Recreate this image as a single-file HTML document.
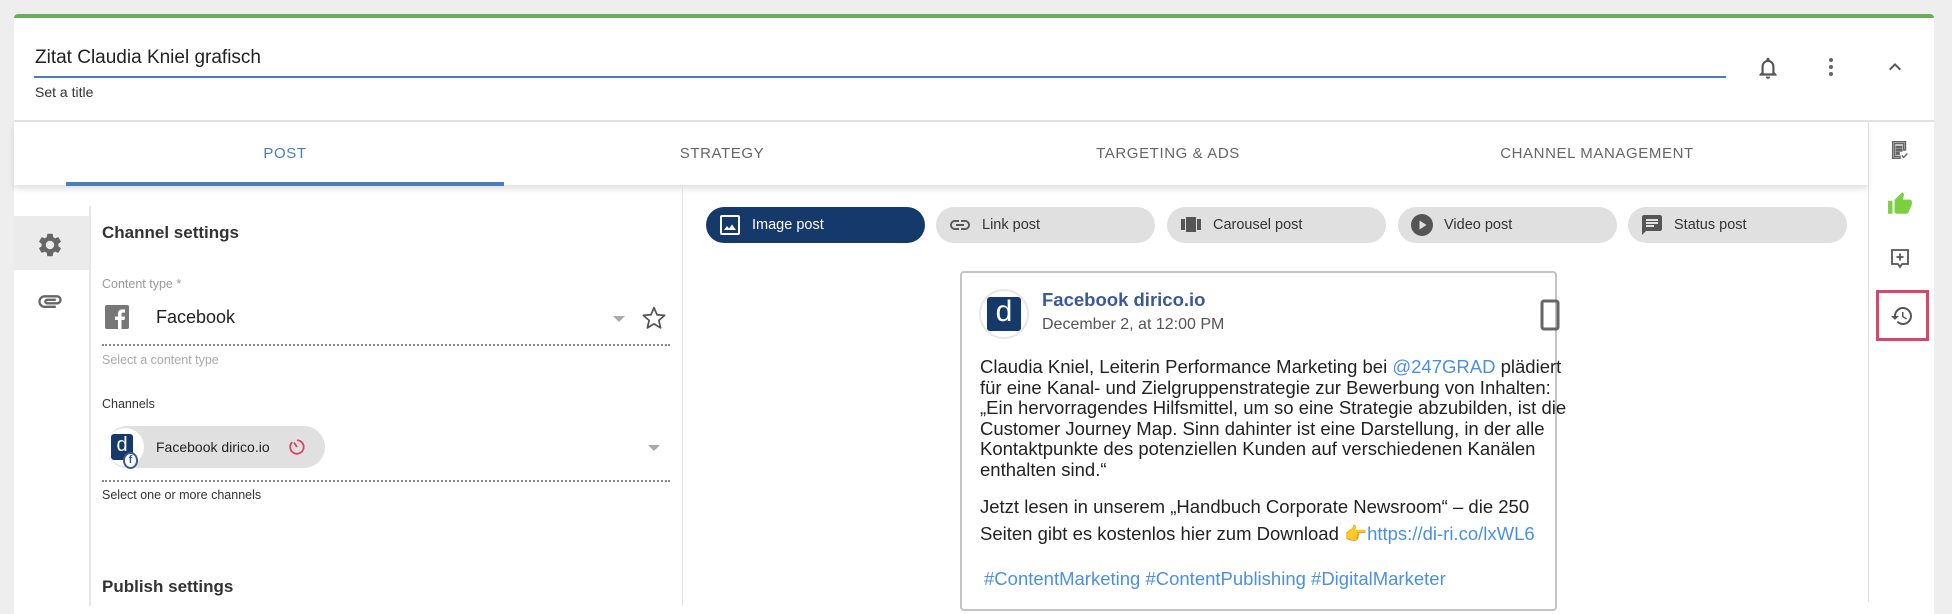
<!DOCTYPE html>
<html><head><meta charset="utf-8"><style>
*{box-sizing:border-box;margin:0;padding:0}
body{width:1952px;height:596px;background:#eeeeee;font-family:"Liberation Sans",Arial,sans-serif;position:relative;overflow:hidden;color:#333}
.a{position:absolute}
.card{left:14px;top:14px;width:1920px;height:600px;background:#fff;border-top:4px solid #6aae5a;border-radius:4px 4px 0 0}
.tab{position:absolute;top:145px;font-size:15px;letter-spacing:.6px;color:#666;transform:translateX(-50%)}
.pill{position:absolute;top:207px;height:36px;border-radius:18px;background:#e0e0e0;font-size:14.5px;color:#333;line-height:36px;padding-left:46px;width:219px}
.pill svg{position:absolute;left:12px;top:6px}
.dots{border-top:2px dotted #888}
.bt{font-size:18.5px;color:#222;line-height:20.6px}
.lnk{color:#4a90e2}
</style></head><body>
<div class="a card"></div>
<!-- header -->
<div class="a" style="left:35px;top:47px;font-size:19px;color:#222">Zitat Claudia Kniel grafisch</div>
<div class="a" style="left:34px;top:76px;width:1692px;height:2px;background:#4a7cc0"></div>
<div class="a" style="left:35px;top:84px;font-size:14px;color:#333">Set a title</div>
<svg class="a" style="left:1755px;top:54px" width="26" height="28" viewBox="0 0 24 24"><path d="M12 22c1.1 0 2-.9 2-2h-4c0 1.1.9 2 2 2zm6-6v-5c0-3.07-1.64-5.640-4.5-6.32V4c0-.83-.67-1.5-1.5-1.5s-1.5.67-1.5 1.5v.68C7.63 5.36 6 7.92 6 11v5l-2 2v1h16v-1l-2-2zm-2 1H8v-6c0-2.48 1.51-4.5 4-4.5s4 2.02 4 4.5v6z" fill="#555"/></svg>
<svg class="a" style="left:1819px;top:55px" width="24" height="24" viewBox="0 0 24 24"><circle cx="12" cy="5" r="2" fill="#666"/><circle cx="12" cy="12" r="2" fill="#666"/><circle cx="12" cy="19" r="2" fill="#666"/></svg>
<svg class="a" style="left:1883px;top:55px" width="24" height="24" viewBox="0 0 24 24"><path d="M7.4 15.4 12 10.8l4.6 4.6L18 14l-6-6-6 6z" fill="#555"/></svg>
<div class="a" style="left:14px;top:120px;width:1920px;height:2px;background:#e2e2e2"></div>
<!-- tabs -->
<div class="a" style="left:14px;top:122px;width:1854px;height:63px;background:#fff;box-shadow:0 4px 6px rgba(0,0,0,.12)"></div>
<div class="tab" style="left:285px;color:#4a7cc0">POST</div>
<div class="tab" style="left:722px">STRATEGY</div>
<div class="tab" style="left:1168px">TARGETING &amp; ADS</div>
<div class="tab" style="left:1597px">CHANNEL MANAGEMENT</div>
<div class="a" style="left:66px;top:182px;width:438px;height:4px;background:#4a7cc0"></div>
<!-- right sidebar -->
<div class="a" style="left:1868px;top:122px;width:1px;height:480px;background:#e0e0e0"></div>
<svg class="a" style="left:1889px;top:139px" width="22" height="22" viewBox="0 0 24 24"><path d="M4 3h14v9h-2V5H6v14h6v2H4z M8 8h6v1.6H8zM8 11.5h6v1.6H8zM8 15h3v1.6H8zM14 18l2 2 4-4" fill="none" stroke="#666" stroke-width="1.6"/></svg>
<svg class="a" style="left:1887px;top:191px" width="26" height="26" viewBox="0 0 24 24"><path d="M1 21h4V9H1v12zm22-11c0-1.1-.9-2-2-2h-6.3l1-4.6c0-.4-.1-.8-.4-1.1L14.2 1 7.6 7.6C7.2 7.9 7 8.4 7 9v10c0 1.1.9 2 2 2h9c.8 0 1.5-.5 1.8-1.2l3-7.1c.1-.2.2-.5.2-.7v-2z" fill="#7ccf3e"/></svg>
<svg class="a" style="left:1888px;top:247px" width="24" height="24" viewBox="0 0 24 24"><path d="M4 3h16v14h-6l-2 3-2-3H4z" fill="none" stroke="#555" stroke-width="1.8"/><path d="M12 6.5v7M8.5 10h7" stroke="#555" stroke-width="1.8"/></svg>
<div class="a" style="left:1876px;top:290px;width:53px;height:51px;border:3px solid #d9456b"></div>
<svg class="a" style="left:1890px;top:304px" width="24" height="24" viewBox="0 0 24 24"><path d="M13 3a9 9 0 0 0-9 9H1l3.9 3.9L9 12H6a7 7 0 1 1 2.05 4.95l-1.42 1.42A9 9 0 1 0 13 3zm-1 5v5l4.3 2.5.7-1.2-3.5-2.1V8z" fill="#555"/></svg>
<!-- left nav -->
<div class="a" style="left:14px;top:216px;width:76px;height:54px;background:#ebebeb"></div>
<div class="a" style="left:89px;top:206px;width:2px;height:400px;background:#e6e6e6"></div>
<svg class="a" style="left:36px;top:231px" width="28" height="28" viewBox="0 0 24 24"><path d="M19.14 12.94c.04-.3.06-.61.06-.94 0-.32-.02-.64-.07-.94l2.03-1.58a.49.49 0 0 0 .12-.61l-1.920-3.32a.49.49 0 0 0-.59-.22l-2.39.96c-.5-.38-1.03-.7-1.62-.94l-.36-2.54a.48.48 0 0 0-.48-.41h-3.84c-.24 0-.43.17-.47.41l-.36 2.54c-.59.24-1.130.57-1.62.94l-2.39-.96a.48.48 0 0 0-.59.22L2.74 8.87c-.12.21-.08.47.12.61l2.03 1.58c-.05.3-.09.63-.09.94s.02.64.07.94l-2.03 1.58a.49.49 0 0 0-.12.61l1.92 3.32c.12.22.37.29.59.22l2.39-.96c.5.38 1.03.7 1.62.94l.36 2.54c.05.24.24.41.48.41h3.84c.24 0 .44-.17.47-.41l.36-2.54c.59-.24 1.13-.56 1.62-.94l2.39.96c.22.08.47 0 .59-.22l1.92-3.32c.12-.22.07-.47-.12-.61l-2.01-1.58zM12 15.6A3.6 3.6 0 1 1 12 8.4a3.6 3.6 0 0 1 0 7.2z" fill="#666"/></svg>
<svg class="a" style="left:36px;top:287px" width="28" height="28" viewBox="0 0 24 24"><path d="M2 12.5C2 9.46 4.46 7 7.5 7H18c2.21 0 4 1.79 4 4s-1.79 4-4 4H9.5a2.5 2.5 0 0 1 0-5H17v2H9.41c-.55 0-.55 1 0 1H18c1.1 0 2-.9 2-2s-.9-2-2-2H7.5C5.57 9 4 10.57 4 12.5S5.57 16 7.5 16H17v2H7.5C4.46 18 2 15.54 2 12.5z" fill="#666"/></svg>
<!-- left panel -->
<div class="a" style="left:682px;top:186px;width:1px;height:420px;background:#e3e3e3"></div>
<div class="a" style="left:102px;top:223px;font-size:17px;font-weight:bold;color:#333">Channel settings</div>
<div class="a" style="left:102px;top:277px;font-size:12.5px;color:#999">Content type *</div>
<svg class="a" style="left:105px;top:305px" width="24" height="24" viewBox="0 0 24 24"><rect x="0" y="0" width="24" height="24" rx="2" fill="#777"/><path d="M16.5 24v-9h3l.5-3.5h-3.5V9.3c0-1 .3-1.7 1.7-1.7H20V4.5c-.3 0-1.4-.1-2.6-.1-2.6 0-4.4 1.6-4.4 4.5v2.6H10V15h3v9z" fill="#fff"/></svg>
<div class="a" style="left:156px;top:307px;font-size:18px;color:#222">Facebook</div>
<div class="a" style="left:613px;top:316px;border-left:6px solid transparent;border-right:6px solid transparent;border-top:6px solid #aaa"></div>
<svg class="a" style="left:641px;top:305px" width="26" height="26" viewBox="0 0 24 24"><path d="M12 2.5l2.8 6.5 7 .6-5.3 4.6 1.6 6.9L12 17.4l-6.1 3.7 1.6-6.9L2.2 9.6l7-.6z" fill="none" stroke="#555" stroke-width="1.6" stroke-linejoin="round"/></svg>
<div class="a dots" style="left:102px;top:344px;width:568px"></div>
<div class="a" style="left:102px;top:353px;font-size:12.5px;color:#aaa">Select a content type</div>
<div class="a" style="left:102px;top:397px;font-size:12.5px;color:#333">Channels</div>
<div class="a" style="left:106px;top:426px;width:219px;height:42px;border-radius:21px;background:#e0e0e0"></div>
<div class="a" style="left:106px;top:428px;width:38px;height:38px;border-radius:50%;background:#fff"></div>
<div class="a" style="left:111px;top:434px;width:22px;height:26px;border-radius:3px;background:#16396b;color:#fff;font-size:20px;line-height:22px;text-align:center">d</div>
<div class="a" style="left:123px;top:452px;width:15px;height:17px;border-radius:50%;background:#fff;border:2px solid #3b5998;color:#3b5998;font-size:11px;font-weight:bold;line-height:13px;text-align:center">f</div>
<div class="a" style="left:156px;top:439px;font-size:14px;color:#222">Facebook dirico.io</div>
<svg class="a" style="left:288px;top:438px" width="18" height="18" viewBox="0 0 24 24"><path d="M12 3a9 9 0 1 1-6.4 2.6" fill="none" stroke="#d9456b" stroke-width="2.4"/><path d="M8 6l4 6" stroke="#d9456b" stroke-width="2.4"/></svg>
<div class="a" style="left:648px;top:445px;border-left:6px solid transparent;border-right:6px solid transparent;border-top:6px solid #aaa"></div>
<div class="a dots" style="left:102px;top:480px;width:568px"></div>
<div class="a" style="left:102px;top:488px;font-size:12.5px;color:#333">Select one or more channels</div>
<div class="a" style="left:102px;top:577px;font-size:17px;font-weight:bold;color:#333">Publish settings</div>
<!-- pills -->
<div class="pill" style="left:706px;background:#16396b;color:#fff"><svg width="24" height="24" viewBox="0 0 24 24"><rect x="3" y="3" width="18" height="18" rx="1" fill="none" stroke="#fff" stroke-width="2"/><path d="M6 17l3-4 2 2.5 3-4 4 5.5z" fill="#fff"/></svg>Image post</div>
<div class="pill" style="left:936px"><svg width="24" height="24" viewBox="0 0 24 24"><path d="M3.9 12c0-1.71 1.39-3.1 3.1-3.1h4V7H7a5 5 0 0 0 0 10h4v-1.9H7c-1.71 0-3.1-1.39-3.1-3.1zM8 13h8v-2H8v2zm9-6h-4v1.9h4c1.71 0 3.1 1.39 3.1 3.1s-1.39 3.1-3.1 3.1h-4V17h4a5 5 0 0 0 0-10z" fill="#555"/></svg>Link post</div>
<div class="pill" style="left:1167px"><svg width="24" height="24" viewBox="0 0 24 24"><path d="M7 19h10V4H7v15zm-5-2h4V6H2v11zm16-11v11h4V6h-4z" fill="#555"/></svg>Carousel post</div>
<div class="pill" style="left:1398px"><svg width="24" height="24" viewBox="0 0 24 24"><circle cx="12" cy="12" r="11" fill="#555"/><path d="M9.5 7.5v9l7-4.5z" fill="#e0e0e0"/></svg>Video post</div>
<div class="pill" style="left:1628px"><svg width="24" height="24" viewBox="0 0 24 24"><path d="M20 2H4c-1.1 0-2 .9-2 2v18l4-4h14c1.1 0 2-.9 2-2V4c0-1.1-.9-2-2-2zM6 9h12v2H6V9zm8 5H6v-2h8v2zm4-6H6V6h12v2z" fill="#555"/></svg>Status post</div>
<!-- post card -->
<div class="a" style="left:960px;top:271px;width:597px;height:340px;border:2px solid #c4c4c4;border-radius:4px;background:#fff"></div>
<div class="a" style="left:979px;top:289px;width:50px;height:50px;border-radius:50%;border:2px solid #e8e8e8;background:#fff"></div>
<div class="a" style="left:987px;top:297px;width:34px;height:34px;border-radius:3px;background:#16396b;color:#fff;font-size:30px;line-height:30px;text-align:center">d</div>
<div class="a" style="left:1042px;top:289px;font-size:18.5px;font-weight:bold;color:#3b5998">Facebook dirico.io</div>
<div class="a" style="left:1042px;top:316px;font-size:16px;color:#555">December 2, at 12:00 PM</div>
<svg class="a" style="left:1540px;top:299px" width="20" height="32" viewBox="0 0 20 32"><rect x="2" y="2" width="16" height="28" rx="2" fill="none" stroke="#666" stroke-width="3"/></svg>
<div class="a bt" style="left:980px;top:357px;white-space:nowrap">Claudia Kniel, Leiterin Performance Marketing bei <span class="lnk">@247GRAD</span> plädiert<br>für eine Kanal- und Zielgruppenstrategie zur Bewerbung von Inhalten:<br>„Ein hervorragendes Hilfsmittel, um so eine Strategie abzubilden, ist die<br>Customer Journey Map. Sinn dahinter ist eine Darstellung, in der alle<br>Kontaktpunkte des potenziellen Kunden auf verschiedenen Kanälen<br>enthalten sind.“</div>
<div class="a bt" style="left:980px;top:497px;white-space:nowrap">Jetzt lesen in unserem „Handbuch Corporate Newsroom“ – die 250</div>
<div class="a bt" style="left:980px;top:524px;white-space:nowrap">Seiten gibt es kostenlos hier zum Download <span style="color:#f0a020">👉</span><span class="lnk">https://di-ri.co/lxWL6</span></div>
<div class="a bt" style="left:984px;top:569px;white-space:nowrap"><span class="lnk">#ContentMarketing #ContentPublishing #DigitalMarketer</span></div>
</body></html>
